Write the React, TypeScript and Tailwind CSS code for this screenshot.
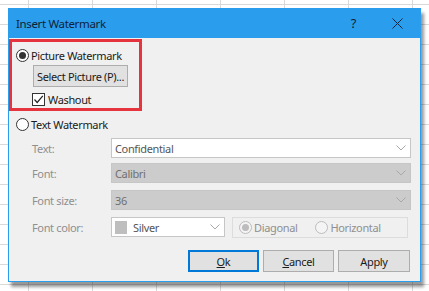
import React from "react";

function Radio({ checked = false, disabled = false }: { checked?: boolean; disabled?: boolean }) {
  return (
    <span
      className={`flex h-[13px] w-[13px] shrink-0 items-center justify-center rounded-full border ${
        disabled ? "border-[#bcbcbc] bg-[#f4f4f4]" : "border-[#333333] bg-white"
      }`}
    >
      {checked && (
        <span className={`h-[7px] w-[7px] rounded-full ${disabled ? "bg-[#bcbcbc]" : "bg-[#333333]"}`} />
      )}
    </span>
  );
}

function Chevron() {
  return (
    <svg width="10" height="6" viewBox="0 0 10 6" className="shrink-0">
      <path d="M0.5 0.5 L5 5 L9.5 0.5" fill="none" stroke="#a8a8a8" strokeWidth="1" />
    </svg>
  );
}

function Combo({
  value,
  disabled = false,
}: {
  value: string;
  disabled?: boolean;
}) {
  return (
    <div
      className={`flex h-[20px] w-[300px] items-center justify-between border pl-[3px] pr-[4px] ${
        disabled ? "border-[#c6c6c6] bg-[#cccccc] text-[#6f6f6f]" : "border-[#c6c6c6] bg-white text-[#555555]"
      }`}
    >
      <span>{value}</span>
      <Chevron />
    </div>
  );
}

function Row({ label, children, mt }: { label: string; children: React.ReactNode; mt: string }) {
  return (
    <div className={`flex h-[20px] items-center pl-[23px] ${mt}`}>
      <span className="w-[79px] shrink-0 text-[#8f8f8f]">{label}</span>
      {children}
    </div>
  );
}

function DlgButton({ children, focused = false, w }: { children: React.ReactNode; focused?: boolean; w: string }) {
  return (
    <div
      className={`flex h-[22px] ${w} items-center justify-center bg-[#e1e1e1] text-[#1a1a1a] ${
        focused ? "border-2 border-[#0078d7]" : "border border-[#adadad]"
      }`}
    >
      {children}
    </div>
  );
}

export default function App() {
  return (
    <div
      className="h-[291px] w-[429px] overflow-hidden whitespace-nowrap bg-white bg-[linear-gradient(to_right,#d9d9d9_1px,transparent_1px),linear-gradient(to_bottom,#d9d9d9_1px,transparent_1px)] bg-[length:64px_20px] bg-[position:28px_4px] pl-[8px] pt-[8px] text-[11px] leading-none tracking-[-0.35px]"
      style={{ fontFamily: '"Noto Sans", "Open Sans", sans-serif' }}
    >
      <div className="flex h-[274px] w-[413px] flex-col border border-[#2b9ded] bg-[#f0f0f0] shadow-[3px_5px_3px_rgba(0,0,0,0.4)]">
        {/* title bar */}
        <div className="flex h-[29px] shrink-0 items-center bg-[#2b9ded] pl-[7px] pr-[17px] text-[11.5px] text-[#0f2238]">
          <span>Insert Watermark</span>
          <span className="ml-auto text-[13px]">?</span>
          <svg width="11" height="11" viewBox="0 0 11 11" className="ml-[36px]">
            <path d="M0.5 0.5 L10.5 10.5 M10.5 0.5 L0.5 10.5" stroke="#0f2238" strokeWidth="1" />
          </svg>
        </div>

        {/* highlighted picture section */}
        <div className="mt-[1px] flex h-[72px] w-[133px] flex-col border-[3px] border-[#e5343e] text-[#1a1a1a]">
          <div className="mt-[5px] flex h-[16px] items-center pl-[4px]">
            <Radio checked />
            <span className="ml-[2px]">Picture Watermark</span>
          </div>
          <div className="ml-[21px] mt-[2px] flex h-[22px] w-[95px] items-center justify-center border border-[#adadad] bg-[#e1e1e1]">
            Select Picture (P)...
          </div>
          <div className="mt-[4px] flex h-[16px] items-center pl-[20px]">
            <span className="flex h-[13px] w-[13px] items-center justify-center border border-[#333333] bg-white">
              <svg width="11" height="11" viewBox="0 0 11 11">
                <path d="M1.5 5.5 L4.2 8.5 L9.8 1.8" fill="none" stroke="#222222" strokeWidth="1.2" />
              </svg>
            </span>
            <span className="ml-[3px]">Washout</span>
          </div>
        </div>

        <div className="mt-[5px] flex h-[16px] items-center pl-[7px] text-[#1a1a1a]">
          <Radio />
          <span className="ml-[2px]">Text Watermark</span>
        </div>

        <Row label="Text:" mt="mt-[6px]">
          <Combo value="Confidential" />
        </Row>
        <Row label="Font:" mt="mt-[5px]">
          <Combo value="Calibri" disabled />
        </Row>
        <Row label="Font size:" mt="mt-[7px]">
          <Combo value="36" disabled />
        </Row>
        <Row label="Font color:" mt="mt-[7px]">
          <div className="flex h-[20px] w-[114px] items-center border border-[#c6c6c6] bg-white pl-[3px] pr-[4px] text-[#555555]">
            <span className="h-[13px] w-[12px] bg-[#bebebe]" />
            <span className="ml-[6px]">Silver</span>
            <span className="ml-auto">
              <Chevron />
            </span>
          </div>
          <div className="ml-[7px] flex h-[21px] w-[176px] items-center border border-[#dcdcdc] pl-[6px] text-[#8f8f8f]">
            <Radio checked disabled />
            <span className="ml-[2px]">Diagonal</span>
            <span className="ml-[18px]">
              <Radio disabled />
            </span>
            <span className="ml-[2px]">Horizontal</span>
          </div>
        </Row>

        <div className="mt-[13px] flex justify-end gap-[4px] pr-[10px]">
          <DlgButton focused w="w-[71px]">
            <span>
              <span className="underline">O</span>k
            </span>
          </DlgButton>
          <DlgButton w="w-[71px]">
            <span>
              <span className="underline">C</span>ancel
            </span>
          </DlgButton>
          <DlgButton w="w-[72px]">Apply</DlgButton>
        </div>
      </div>
    </div>
  );
}
